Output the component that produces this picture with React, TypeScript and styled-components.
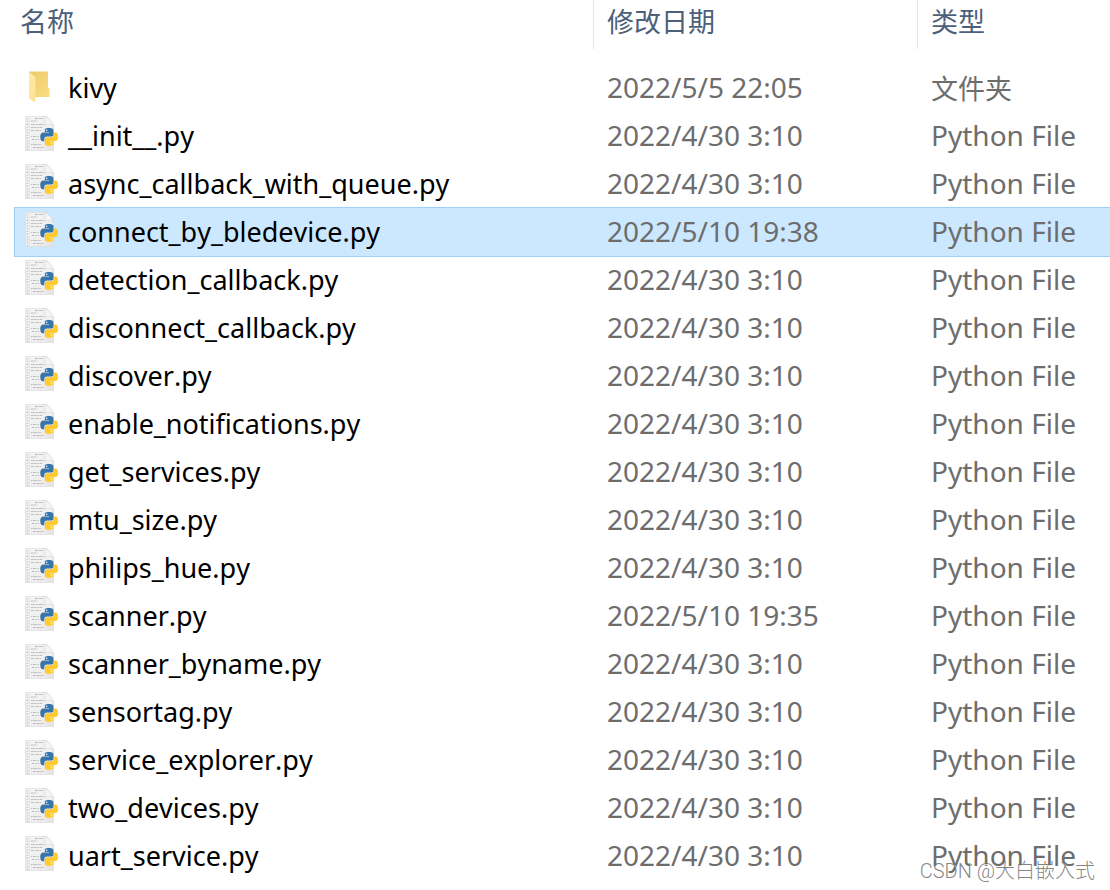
import React from "react";
import styled, { createGlobalStyle } from "styled-components";

const GlobalStyle = createGlobalStyle`
  body {
    margin: 0;
    background: #fff;
    font-family: "Noto Sans", "Noto Sans CJK SC", sans-serif;
    font-kerning: none;
    overflow-x: hidden;
  }
`;

const Explorer = styled.main`
  position: relative;
  padding: 0 0 10px 15px;
`;

const FileTable = styled.table`
  width: 100%;
  table-layout: fixed;
  border-collapse: collapse;
  font-size: 28px;
  line-height: 46px;
  text-align: left;
  white-space: nowrap;
`;

const Column = styled.col<{ $width?: number }>`
  width: ${({ $width }) => ($width ? `${$width}px` : "auto")};
`;

const HeaderCell = styled.th<{ $first?: boolean }>`
  height: 64px;
  padding: 0;
  vertical-align: top;
  font-size: 27px;
  font-weight: 400;
  line-height: 44px;
  color: #4c607a;

  & > div {
    height: 49px;
    box-sizing: border-box;
    padding-left: ${({ $first }) => ($first ? 5 : 13)}px;
    border-left: ${({ $first }) => ($first ? "none" : "1px solid #e5e5e5")};
  }
`;

const FileRow = styled.tr<{ $selected?: boolean }>`
  background: ${({ $selected }) => ($selected ? "#cce8ff" : "transparent")};
  outline: ${({ $selected }) => ($selected ? "1px solid #99d1ff" : "none")};
`;

const NameCell = styled.td`
  padding: 0 0 0 9px;
  color: #000;
  font-size: 27px;
`;

const NameContent = styled.div`
  display: flex;
  align-items: center;
  gap: 8px;
  height: 48px;
`;

const DetailCell = styled.td<{ $cjk?: boolean }>`
  padding: ${({ $cjk }) => ($cjk ? "2px 0 0 14px" : "0 0 2px 14px")};
  color: #6d6d6d;
  font-size: ${({ $cjk }) => ($cjk ? 27 : 28)}px;
`;

const IconSvg = styled.svg`
  flex: none;
  width: 36px;
  height: 36px;
  margin-bottom: 4px;
`;

const Watermark = styled.div`
  position: absolute;
  right: 15px;
  bottom: 4px;
  font-family: Roboto, "Noto Sans CJK SC", sans-serif;
  font-size: 20px;
  font-weight: 300;
  line-height: 30px;
  color: rgba(110, 110, 110, 0.85);
  text-shadow: 1px 1px 0 rgba(255, 255, 255, 0.8);
`;

function FolderIcon() {
  return (
    <IconSvg viewBox="0 0 36 36" aria-hidden="true">
      <defs>
        <linearGradient id="folderBack" x1="0" y1="0" x2="1" y2="1">
          <stop offset="0" stopColor="#eecb6c" />
          <stop offset="1" stopColor="#f9dc82" />
        </linearGradient>
        <linearGradient id="folderFront" x1="0" y1="0" x2="0" y2="1">
          <stop offset="0" stopColor="#ffeaa6" />
          <stop offset="1" stopColor="#ffe292" />
        </linearGradient>
      </defs>
      <path d="M5 3.500H24V19.500L25.500 21V29H11L5 23Z" fill="url(#folderBack)" />
      <path d="M5 4L11.500 9V33.500L10 34L5 30Z" fill="url(#folderFront)" />
    </IconSvg>
  );
}

function PythonFileIcon() {
  return (
    <IconSvg viewBox="0 0 36 36" aria-hidden="true">
      <defs>
        <linearGradient id="paper" x1="0" y1="0" x2="1" y2="1">
          <stop offset="0" stopColor="#f4f4f4" />
          <stop offset="0.6" stopColor="#efefef" />
          <stop offset="1" stopColor="#e2e2e2" />
        </linearGradient>
      </defs>
      <path
        d="M1.500 .5H20C23 .5 24.500 2 26 4L29.500 9.500V34.500H1.500Z"
        fill="url(#paper)"
        stroke="#dcdcdc"
        strokeWidth="0.7"
      />
      <path d="M20 .5C22 3 21 6 20.500 9C23.500 7.500 27 8 29.500 10C28 5 24 1 20 .5Z" fill="#f6f6f6" stroke="#d0d0d0" strokeWidth="0.6" />
      <path d="M3.500 2V34" stroke="#cacaca" strokeWidth="1.600" strokeDasharray="1.300 1.500" />
      <path d="M5.500 1V34" stroke="#dedede" strokeWidth="0.5" />
      <g stroke="#bdbdbd" strokeWidth="1.100" fill="none">
        <path d="M11 2.500H19" strokeDasharray="3 .7 1 .6" />
        <path d="M7 5H13" strokeDasharray="2 .7" />
        <path d="M7 8.500H20" strokeDasharray="4 .8 2 .6" />
        <path d="M7 11.500H18" strokeDasharray="2 .6 3 .8" />
        <path d="M7 14.500H17" strokeDasharray="3 .7 1 .6" />
        <path d="M7 20.500H15" strokeDasharray="1 .8 3 .7" />
        <path d="M8 23.500H15" strokeDasharray="2 .8" />
        <path d="M7 28.500H17" strokeDasharray="1.500 .7 4 .8" />
        <path d="M9 31.500H19" strokeDasharray="3 .8" />
      </g>
      <g transform="translate(16.300 12) scale(.74)">
        <path
          fill="#3776ab"
          d="M14.250.18l.9.2.73.26.59.3.45.32.34.34.25.34.16.33.1.3.04.26.02.2-.01.13V8.5l-.05.63-.13.55-.21.46-.26.38-.3.31-.33.25-.35.19-.35.14-.33.1-.3.07-.26.04-.21.02H8.770l-.69.05-.59.14-.5.22-.41.27-.33.32-.27.35-.2.36-.15.37-.1.35-.07.32-.04.27-.02.21v3.060H3.170l-.21-.03-.28-.07-.32-.12-.35-.18-.36-.26-.36-.36-.35-.46-.32-.59-.28-.73-.21-.88-.14-1.050-.05-1.230.06-1.220.16-1.040.24-.87.32-.71.36-.57.4-.44.42-.33.42-.24.4-.16.36-.1.32-.05.24-.01h.16l.06.01h8.160v-.83H6.180l-.01-2.750-.02-.37.05-.34.11-.31.17-.28.25-.26.31-.23.38-.2.44-.18.51-.15.58-.12.64-.1.71-.06.77-.04.84-.02 1.270.05z"
        />
        <path
          fill="#ffcb2e"
          d="M21.040 6.110l.28.06.32.12.35.18.36.27.36.35.35.47.32.59.28.73.21.88.14 1.040.05 1.230-.06 1.230-.16 1.040-.24.86-.32.71-.36.57-.4.45-.42.33-.42.24-.4.16-.36.09-.32.05-.24.02-.16-.01h-8.220v.82h5.840l.01 2.760.02.36-.05.34-.11.31-.17.29-.25.25-.31.24-.38.2-.44.17-.51.15-.58.13-.64.09-.71.07-.77.04-.84.01-1.270-.04-1.070-.14-.9-.2-.73-.25-.59-.3-.45-.33-.34-.34-.25-.34-.16-.33-.1-.3-.04-.25-.02-.2.01-.13v-5.340l.05-.64.13-.54.21-.46.26-.38.3-.32.33-.24.35-.2.35-.14.33-.1.3-.06.26-.04.21-.02.13-.01h5.840l.69-.05.59-.14.5-.21.41-.28.33-.32.27-.35.2-.36.15-.36.1-.35.07-.32.04-.28.02-.21V6.070h2.090z"
        />
        <circle cx="8.700" cy="2.900" r="1" fill="#fff" />
        <circle cx="15.300" cy="21.100" r="1" fill="#fff" />
      </g>
    </IconSvg>
  );
}

interface FileEntry {
  name: string;
  modified: string;
  folder?: boolean;
  selected?: boolean;
}

const ORIGINAL = "2022/4/30 3:10";

const files: FileEntry[] = [
  { name: "kivy", modified: "2022/5/5 22:05", folder: true },
  { name: "__init__.py", modified: ORIGINAL },
  { name: "async_callback_with_queue.py", modified: ORIGINAL },
  { name: "connect_by_bledevice.py", modified: "2022/5/10 19:38", selected: true },
  { name: "detection_callback.py", modified: ORIGINAL },
  { name: "disconnect_callback.py", modified: ORIGINAL },
  { name: "discover.py", modified: ORIGINAL },
  { name: "enable_notifications.py", modified: ORIGINAL },
  { name: "get_services.py", modified: ORIGINAL },
  { name: "mtu_size.py", modified: ORIGINAL },
  { name: "philips_hue.py", modified: ORIGINAL },
  { name: "scanner.py", modified: "2022/5/10 19:35" },
  { name: "scanner_byname.py", modified: ORIGINAL },
  { name: "sensortag.py", modified: ORIGINAL },
  { name: "service_explorer.py", modified: ORIGINAL },
  { name: "two_devices.py", modified: ORIGINAL },
  { name: "uart_service.py", modified: ORIGINAL },
];

export default function App() {
  return (
    <Explorer lang="zh-CN">
      <GlobalStyle />
      <FileTable>
        <colgroup>
          <Column $width={578} />
          <Column $width={324} />
          <Column />
        </colgroup>
        <thead>
          <tr>
            <HeaderCell scope="col" $first>
              <div>名称</div>
            </HeaderCell>
            <HeaderCell scope="col">
              <div>修改日期</div>
            </HeaderCell>
            <HeaderCell scope="col">
              <div>类型</div>
            </HeaderCell>
          </tr>
        </thead>
        <tbody>
          {files.map((file) => (
            <FileRow key={file.name} $selected={file.selected} aria-selected={!!file.selected}>
              <NameCell>
                <NameContent>
                  {file.folder ? <FolderIcon /> : <PythonFileIcon />}
                  <span>{file.name}</span>
                </NameContent>
              </NameCell>
              <DetailCell>{file.modified}</DetailCell>
              <DetailCell $cjk={file.folder}>{file.folder ? "文件夹" : "Python File"}</DetailCell>
            </FileRow>
          ))}
        </tbody>
      </FileTable>
      <Watermark>CSDN @大白嵌入式</Watermark>
    </Explorer>
  );
}
